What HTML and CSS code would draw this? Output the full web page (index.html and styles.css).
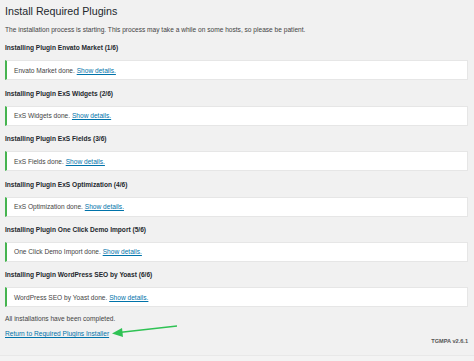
FILE: index.html
```html
<!DOCTYPE html>
<html lang="en">
<head>
    <meta charset="UTF-8">
    <title>Install Required Plugins</title>
    <link rel="stylesheet" href="styles.css">
</head>
<body>
    <div class="wrap">
        <h1>Install Required Plugins</h1>
        <p class="intro">The installation process is starting. This process may take a while on some hosts, so please be patient.</p>

        <h2>Installing Plugin Envato Market (1/6)</h2>
        <div class="notice"><p>Envato Market done. <a href="#">Show details.</a></p></div>

        <h2>Installing Plugin ExS Widgets (2/6)</h2>
        <div class="notice"><p>ExS Widgets done. <a href="#">Show details.</a></p></div>

        <h2>Installing Plugin ExS Fields (3/6)</h2>
        <div class="notice"><p>ExS Fields done. <a href="#">Show details.</a></p></div>

        <h2>Installing Plugin ExS Optimization (4/6)</h2>
        <div class="notice"><p>ExS Optimization done. <a href="#">Show details.</a></p></div>

        <h2>Installing Plugin One Click Demo Import (5/6)</h2>
        <div class="notice"><p>One Click Demo Import done. <a href="#">Show details.</a></p></div>

        <h2>Installing Plugin WordPress SEO by Yoast (6/6)</h2>
        <div class="notice"><p>WordPress SEO by Yoast done. <a href="#">Show details.</a></p></div>

        <p class="done">All installations have been completed.</p>
        <div class="return">
            <a href="#">Return to Required Plugins Installer</a>
            <svg class="arrow" width="72" height="16" viewBox="0 0 72 16">
                <line x1="66" y1="2" x2="8" y2="8.5" stroke="#2fc254" stroke-width="1.6"/>
                <polygon points="1,9.5 11,4 12,13" fill="#2fc254"/>
            </svg>
            <span class="version">TGMPA v2.6.1</span>
        </div>
    </div>
    <div class="footer"></div>
</body>
</html>
```

FILE: styles.css
```css
* {
    margin: 0;
    padding: 0;
    box-sizing: border-box;
}

body {
    font-family: "Liberation Sans", Arial, sans-serif;
    background: #f1f1f1;
    color: #444;
    font-size: 6.6px;
}

.wrap {
    padding: 4px 6px 0 5px;
}

h1 {
    font-size: 10.7px;
    font-weight: 400;
    color: #23282d;
    line-height: 14px;
}

.intro {
    margin-top: 7px;
    line-height: 10px;
}

h2 {
    font-size: 6.6px;
    font-weight: 700;
    color: #23282d;
    line-height: 10px;
    margin-top: 8.4px;
}

.notice {
    margin-top: 7px;
    height: 20px;
    background: #fff;
    border: 1px solid #e6e6e6;
    border-left: 2px solid #46b450;
    padding-left: 7px;
    display: flex;
    align-items: center;
}

a {
    color: #0073aa;
    text-decoration: underline;
}

.done {
    margin-top: 7px;
    line-height: 10px;
}

.return {
    position: relative;
    display: flex;
    align-items: flex-start;
    margin-top: 5px;
    line-height: 10px;
}

.arrow {
    position: absolute;
    left: 106px;
    top: -5px;
}

.version {
    margin-left: auto;
    margin-top: 7px;
    font-size: 5.6px;
    font-weight: 700;
    color: #555;
}

.footer {
    margin-top: 9px;
    height: 8px;
    border-top: 1px solid #e8e8e8;
    background: #f3f3f3;
}
```
